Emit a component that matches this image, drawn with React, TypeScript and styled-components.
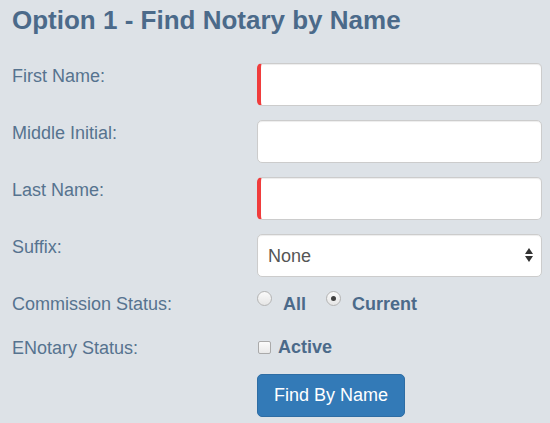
import * as React from "react";
import styled, { createGlobalStyle } from "styled-components";

const Colors = {
  Page: "#dde2e7",
  Title: "#4b6a8a",
  Label: "#56738f",
  InputBorder: "#cccccc",
  Required: "#f03c3c",
  SelectText: "#555555",
  Button: "#337ab7",
  ButtonBorder: "#2e6da4",
};

const GlobalStyle = createGlobalStyle`
  html, body {
    margin: 0;
    padding: 0;
    background: ${Colors.Page};
    font-family: "Liberation Sans", Arial, Helvetica, sans-serif;
  }
  * { box-sizing: border-box; }
`;

const Page = styled.div`
  width: 550px;
  height: 423px;
  overflow: hidden;
  padding: 0 8px 0 12px;
`;

const Title = styled.h3`
  margin: 5px 0 28px;
  font-size: 26px;
  line-height: 30px;
  font-weight: bold;
  color: ${Colors.Title};
`;

const FormRow = styled.div<{ spacing?: number }>`
  display: grid;
  grid-template-columns: 245px 1fr;
  margin-bottom: ${({ spacing }) => (spacing === undefined ? 14 : spacing)}px;
`;

const Label = styled.label`
  padding-top: 2px;
  font-size: 18px;
  line-height: 22px;
  color: ${Colors.Label};
`;

const TextInput = styled.input<{ required?: boolean }>`
  display: block;
  width: 100%;
  height: 43px;
  padding: 0 11px;
  font-family: inherit;
  font-size: 18px;
  color: ${Colors.SelectText};
  background: #fff;
  border: 1px solid ${Colors.InputBorder};
  border-left: ${({ required }) =>
    required ? `4px solid ${Colors.Required}` : `1px solid ${Colors.InputBorder}`};
  border-radius: 5px;
  box-shadow: inset 0 1px 1px rgba(0, 0, 0, 0.075);
  outline: none;
`;

const SelectWrap = styled.div`
  position: relative;
  height: 43px;
`;

const Select = styled.select`
  appearance: none;
  -webkit-appearance: none;
  display: block;
  width: 100%;
  height: 43px;
  padding: 0 30px 0 10px;
  font-family: inherit;
  font-size: 18px;
  color: ${Colors.SelectText};
  background: #fff;
  border: 1px solid ${Colors.InputBorder};
  border-radius: 5px;
  box-shadow: inset 0 1px 1px rgba(0, 0, 0, 0.075);
  outline: none;
`;

const SelectArrows = styled.svg`
  position: absolute;
  right: 9px;
  top: 14px;
  pointer-events: none;
`;

const ChoiceGroup = styled.div`
  display: flex;
  align-items: flex-start;
  height: 24px;
`;

const Choice = styled.label`
  display: flex;
  align-items: flex-start;
  margin-right: 20px;
  font-size: 18px;
  line-height: 22px;
  font-weight: bold;
  color: ${Colors.Title};
`;

const ChoiceText = styled.span<{ offset: number; gap?: number }>`
  padding-top: ${({ offset }) => offset}px;
  margin-left: ${({ gap }) => (gap === undefined ? 11 : gap)}px;
`;

const Radio = styled.input.attrs({ type: "radio" })`
  appearance: none;
  -webkit-appearance: none;
  margin: 0;
  width: 15px;
  height: 15px;
  flex: none;
  border-radius: 50%;
  border: 1px solid #b4b4b4;
  background: linear-gradient(#fafafa, #e6e6e6);
  position: relative;

  &:checked::after {
    content: "";
    position: absolute;
    left: 4px;
    top: 4px;
    width: 5px;
    height: 5px;
    border-radius: 50%;
    background: #404040;
  }
`;

const Checkbox = styled.input.attrs({ type: "checkbox" })`
  appearance: none;
  -webkit-appearance: none;
  margin: 6px 0 0 1px;
  width: 13px;
  height: 13px;
  flex: none;
  border-radius: 2px;
  border: 1px solid #aaaaaa;
  background: linear-gradient(#fbfbfb, #e9e9e9);
`;

const SubmitButton = styled.button`
  height: 43px;
  padding: 0 16px;
  font-family: inherit;
  font-size: 18px;
  color: #fff;
  background: ${Colors.Button};
  border: 1px solid ${Colors.ButtonBorder};
  border-radius: 5px;
  cursor: pointer;
`;

const App: React.FC = () => {
  const [status, setStatus] = React.useState("current");
  const [active, setActive] = React.useState(false);

  return (
    <Page>
      <GlobalStyle />
      <Title>Option 1 - Find Notary by Name</Title>

      <FormRow>
        <Label>First Name:</Label>
        <TextInput required />
      </FormRow>
      <FormRow>
        <Label>Middle Initial:</Label>
        <TextInput />
      </FormRow>
      <FormRow>
        <Label>Last Name:</Label>
        <TextInput required />
      </FormRow>
      <FormRow>
        <Label>Suffix:</Label>
        <SelectWrap>
          <Select defaultValue="none">
            <option value="none">None</option>
            <option value="jr">Jr.</option>
            <option value="sr">Sr.</option>
          </Select>
          <SelectArrows width="8" height="14" viewBox="0 0 8 14">
            <path d="M4 0 L8 6 L0 6 Z" fill="#333" />
            <path d="M0 8 L8 8 L4 14 Z" fill="#333" />
          </SelectArrows>
        </SelectWrap>
      </FormRow>

      <FormRow spacing={20}>
        <Label>Commission Status:</Label>
        <ChoiceGroup>
          <Choice>
            <Radio
              name="status"
              checked={status === "all"}
              onChange={() => setStatus("all")}
            />
            <ChoiceText offset={2}>All</ChoiceText>
          </Choice>
          <Choice>
            <Radio
              name="status"
              checked={status === "current"}
              onChange={() => setStatus("current")}
            />
            <ChoiceText offset={2}>Current</ChoiceText>
          </Choice>
        </ChoiceGroup>
      </FormRow>

      <FormRow spacing={15}>
        <Label>ENotary Status:</Label>
        <ChoiceGroup>
          <Choice>
            <Checkbox checked={active} onChange={() => setActive(!active)} />
            <ChoiceText offset={1} gap={7}>
              Active
            </ChoiceText>
          </Choice>
        </ChoiceGroup>
      </FormRow>

      <FormRow spacing={0}>
        <span />
        <div>
          <SubmitButton type="button">Find By Name</SubmitButton>
        </div>
      </FormRow>
    </Page>
  );
};

export default App;
